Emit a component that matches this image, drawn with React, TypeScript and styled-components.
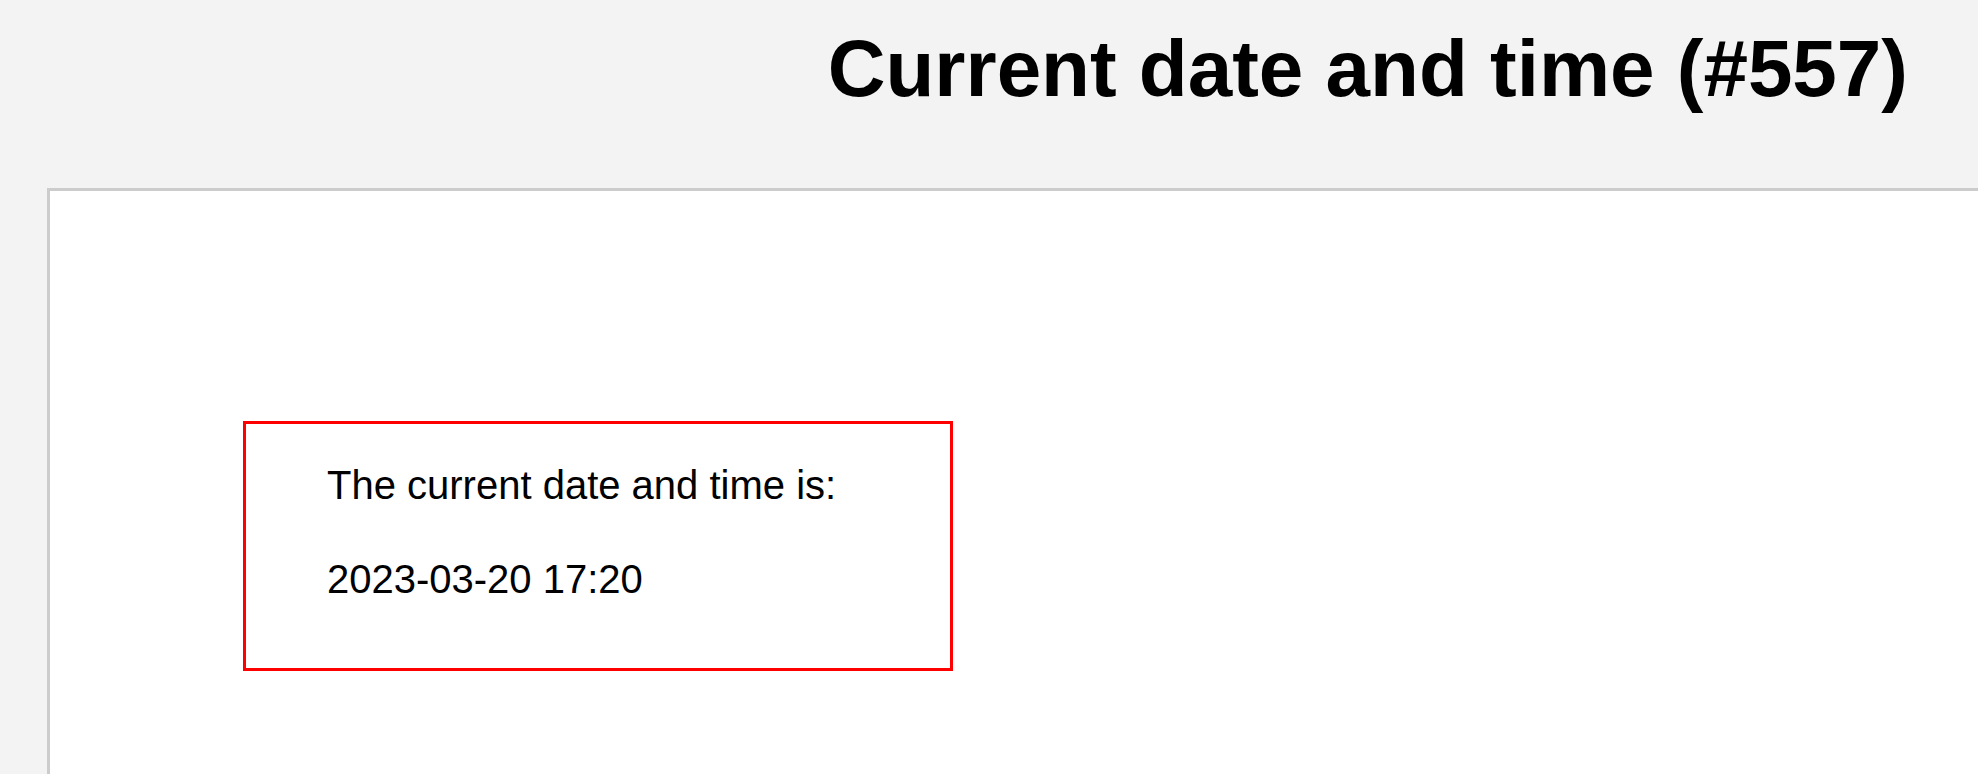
import styled, { createGlobalStyle } from "styled-components";

const GlobalStyle = createGlobalStyle`
  html, body {
    margin: 0;
    padding: 0;
    background-color: #F3F3F3;
    font-family: "Liberation Sans", Arial, sans-serif;
    color: #000000;
  }
  #root {
    min-height: 774px;
    overflow: hidden;
  }
`

const App = () => {
  return (
    <>
      <GlobalStyle />
      <Page>
        <Header>
          <Title>Current date and time (#557)</Title>
        </Header>
        <Panel>
          <DateBox>
            <Line>The current date and time is:</Line>
            <Line>2023-03-20 17:20</Line>
          </DateBox>
        </Panel>
      </Page>
    </>
  );
}

export default App;


const Page = styled.div`
  display: flex;
  flex-direction: column;
  min-height: 774px;
`
const Header = styled.header`
  padding: 23px 70px 0 0;
  height: 188px;
  flex-shrink: 0;
  box-sizing: border-box;

  display: flex;
  justify-content: flex-end;
`
const Title = styled.h1`
  margin: 0;
  font-size: 80px;
  font-weight: 700;
  line-height: 92px;
  white-space: nowrap;
`
const Panel = styled.main`
  flex: 1;
  margin-left: 47px;
  background-color: #FFFFFF;
  border-top: 3px solid #CCCCCC;
  border-left: 3px solid #CCCCCC;
  padding: 230px 0 0 193px;
`
const DateBox = styled.div`
  width: 710px;
  height: 250px;
  box-sizing: border-box;
  border: 3px solid #FF0000;
  padding: 38px 0 0 81px;

  display: flex;
  flex-direction: column;
  gap: 48px;
`
const Line = styled.p`
  margin: 0;
  font-size: 40px;
  line-height: 46px;
`
